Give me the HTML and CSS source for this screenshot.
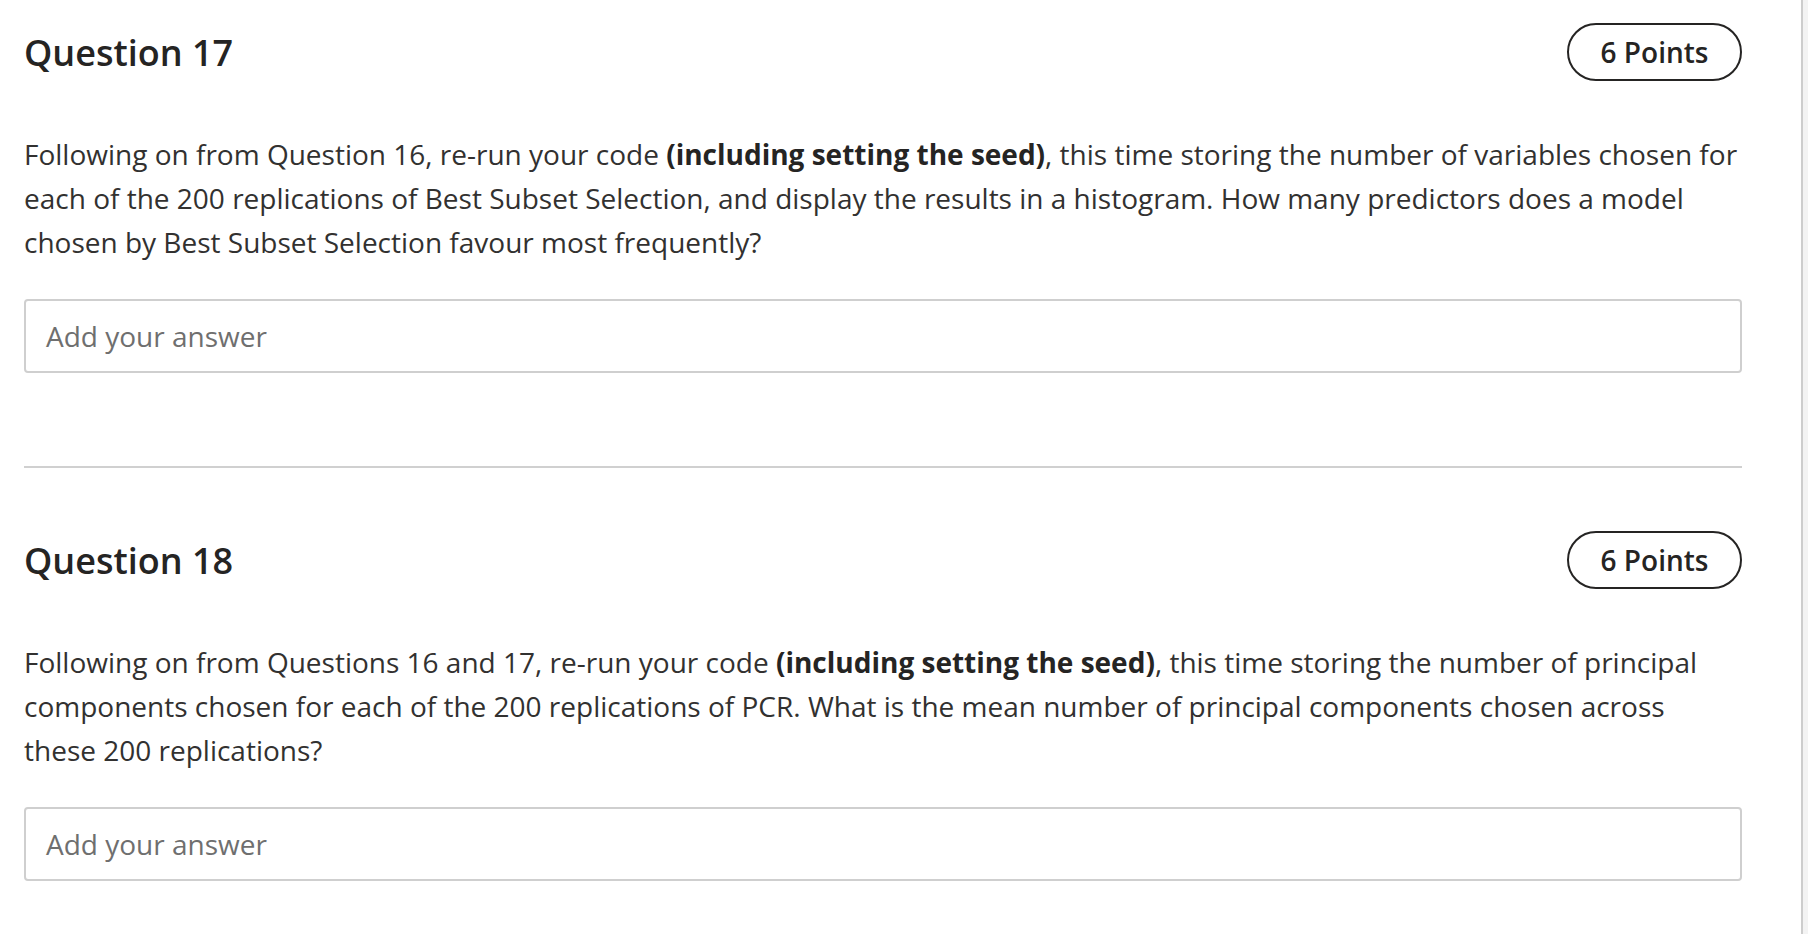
FILE: index.html
```html
<!DOCTYPE html>
<html lang="en">
<head>
<meta charset="utf-8">
<title>Questions</title>
<link rel="stylesheet" href="styles.css">
</head>
<body>
<div class="page">
  <main class="main">
    <section class="question">
      <div class="q-header">
        <h2 class="q-title">Question 17</h2>
        <span class="points">6 Points</span>
      </div>
      <p class="q-text">Following on from Question 16, re-run your code <strong>(including setting the seed)</strong>, this time storing the number of variables chosen for<br>each of the 200 replications of Best Subset Selection, and display the results in a histogram. How many predictors does a model<br>chosen by Best Subset Selection favour most frequently?</p>
      <div class="answer">Add your answer</div>
    </section>
    <hr class="divider">
    <section class="question">
      <div class="q-header">
        <h2 class="q-title">Question 18</h2>
        <span class="points">6 Points</span>
      </div>
      <p class="q-text">Following on from Questions 16 and 17, re-run your code <strong>(including setting the seed)</strong>, this time storing the number of principal<br>components chosen for each of the 200 replications of PCR. What is the mean number of principal components chosen across<br>these 200 replications?</p>
      <div class="answer">Add your answer</div>
    </section>
  </main>
  <div class="scrollbar"></div>
</div>
</body>
</html>
```

FILE: styles.css
```css
* { box-sizing: border-box; }
html, body {
  margin: 0;
  padding: 0;
  background: #ffffff;
  height: 100%;
  overflow: hidden;
}
body {
  font-family: "Open Sans", "Noto Sans", sans-serif;
  color: #323130;
}
.page {
  display: flex;
  height: 100%;
}
.main {
  flex: 1;
  padding: 23px 0 0 24px;
}
.question {
  width: 1718px;
}
.q-header {
  display: flex;
  align-items: center;
  justify-content: space-between;
  height: 58px;
}
.q-title {
  margin: 0;
  font-size: 36px;
  font-weight: 600;
  line-height: 58px;
  color: #252423;
  position: relative;
  top: 1px;
}
.points {
  display: inline-flex;
  align-items: center;
  justify-content: center;
  width: 175px;
  height: 58px;
  border: 2px solid #252423;
  border-radius: 29px;
  font-size: 28px;
  font-weight: 600;
  line-height: 54px;
  color: #252423;
}
.q-text {
  margin: 51px 0 0 0;
  font-size: 28px;
  line-height: 44px;
  color: #323130;
  white-space: nowrap;
}
.q-text strong {
  font-weight: 700;
  color: #252423;
}
.answer {
  margin-top: 35px;
  height: 74px;
  border: 2px solid #cfcfcf;
  border-radius: 4px;
  padding-left: 20px;
  font-size: 28px;
  line-height: 70px;
  color: #6f6f6f;
}
.divider {
  width: 1718px;
  margin: 93px 0 63px 0;
  border: 0;
  height: 2px;
  background: #d0d0d0;
}
.scrollbar {
  width: 7px;
  border-left: 2px solid #cdcdcd;
  background: #f3f3f3;
}
```
